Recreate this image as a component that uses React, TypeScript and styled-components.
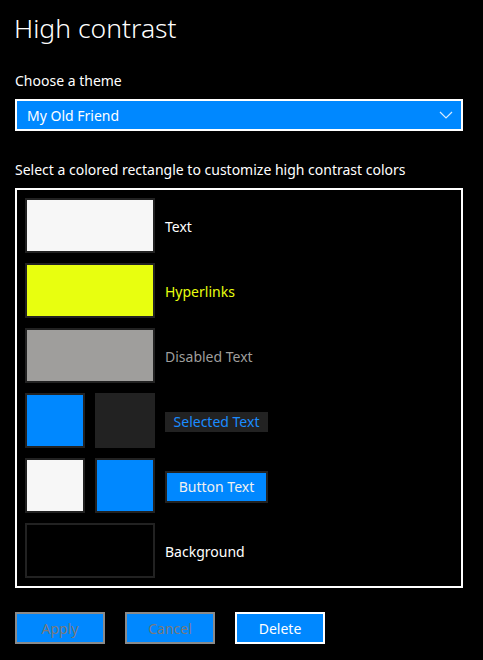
import styled, { createGlobalStyle } from 'styled-components'

const GlobalStyle = createGlobalStyle`
  html, body {
    margin: 0;
    padding: 0;
    background: #000000;
  }
  body {
    font-family: 'Noto Sans', 'Open Sans', sans-serif;
    color: #ffffff;
  }
`

const Page = styled.main`
  width: 483px;
  height: 660px;
  box-sizing: border-box;
  padding: 10px 20px 0 15px;
  background: #000000;
  overflow: hidden;
`

const Title = styled.h1`
  font-size: 26.5px;
  font-weight: 300;
  line-height: 36px;
  margin: 0 0 0 -1px;
  color: #ffffff;
`

const Label = styled.p<{ $gap?: number }>`
  font-size: 14px;
  line-height: 20px;
  margin: ${({ $gap }) => $gap ?? 26}px 0 8px;
  color: #ffffff;
`

const Select = styled.div`
  height: 32px;
  box-sizing: border-box;
  border: 2px solid #ffffff;
  background: #0088ff;
  display: flex;
  align-items: center;
  justify-content: space-between;
  padding: 0 8px 0 10px;
  font-size: 14px;
  color: #ffffff;
`

const ColorsBox = styled.div`
  border: 2px solid #ffffff;
  padding: 8px;
  display: flex;
  flex-direction: column;
  gap: 10px;
`

const Row = styled.div`
  display: flex;
  align-items: center;
  height: 55px;
`

const Swatches = styled.div`
  display: flex;
  gap: 10px;
  width: 130px;
  margin-right: 10px;
  height: 100%;
`

const Swatch = styled.div<{ $color: string }>`
  flex: 1;
  box-sizing: border-box;
  border: 2px solid #222222;
  background: ${({ $color }) => $color};
`

const RowLabel = styled.span<{ $color?: string }>`
  font-size: 14px;
  padding-top: 2px;
  color: ${({ $color }) => $color ?? '#ffffff'};
`

const SelectedSample = styled.span`
  display: inline-flex;
  align-items: center;
  justify-content: center;
  width: 103px;
  height: 20px;
  margin-top: 2px;
  background: #222222;
  color: #1a8cff;
  font-size: 14px;
`

const ButtonSample = styled.span`
  display: inline-flex;
  align-items: center;
  justify-content: center;
  width: 103px;
  height: 32px;
  margin-top: 2px;
  box-sizing: border-box;
  border: 2px solid #222222;
  background: #0088ff;
  color: #f0f0f0;
  font-size: 14px;
`

const Actions = styled.div`
  display: flex;
  gap: 20px;
  margin-top: 24px;
`

const ActionButton = styled.button<{ $enabled?: boolean }>`
  width: 90px;
  height: 32px;
  box-sizing: border-box;
  border: 2px solid ${({ $enabled }) => ($enabled ? '#ffffff' : '#8a8a8a')};
  background: #0088ff;
  color: ${({ $enabled }) => ($enabled ? '#ffffff' : '#7a7a7a')};
  font-family: 'Noto Sans', 'Open Sans', sans-serif;
  font-size: 14px;
  padding: 0;
`

function Chevron() {
  return (
    <svg width="14" height="8" viewBox="0 0 14 8" fill="none">
      <path d="M1 1 L7 7 L13 1" stroke="#d8ebff" strokeWidth="1.2" />
    </svg>
  )
}

export default function App() {
  return (
    <Page>
      <GlobalStyle />
      <Title>High contrast</Title>

      <Label $gap={25}>Choose a theme</Label>
      <Select>
        <span>My Old Friend</span>
        <Chevron />
      </Select>

      <Label $gap={29}>Select a colored rectangle to customize high contrast colors</Label>
      <ColorsBox>
        <Row>
          <Swatches>
            <Swatch $color="#f7f7f7" />
          </Swatches>
          <RowLabel>Text</RowLabel>
        </Row>
        <Row>
          <Swatches>
            <Swatch $color="#e8ff0f" />
          </Swatches>
          <RowLabel $color="#e8ff0f">Hyperlinks</RowLabel>
        </Row>
        <Row>
          <Swatches>
            <Swatch $color="#9f9e9c" />
          </Swatches>
          <RowLabel $color="#9f9e9c">Disabled Text</RowLabel>
        </Row>
        <Row>
          <Swatches>
            <Swatch $color="#0088ff" />
            <Swatch $color="#222222" />
          </Swatches>
          <SelectedSample>Selected Text</SelectedSample>
        </Row>
        <Row>
          <Swatches>
            <Swatch $color="#f7f7f7" />
            <Swatch $color="#0088ff" />
          </Swatches>
          <ButtonSample>Button Text</ButtonSample>
        </Row>
        <Row>
          <Swatches>
            <Swatch $color="#000000" />
          </Swatches>
          <RowLabel>Background</RowLabel>
        </Row>
      </ColorsBox>

      <Actions>
        <ActionButton>Apply</ActionButton>
        <ActionButton>Cancel</ActionButton>
        <ActionButton $enabled>Delete</ActionButton>
      </Actions>
    </Page>
  )
}
